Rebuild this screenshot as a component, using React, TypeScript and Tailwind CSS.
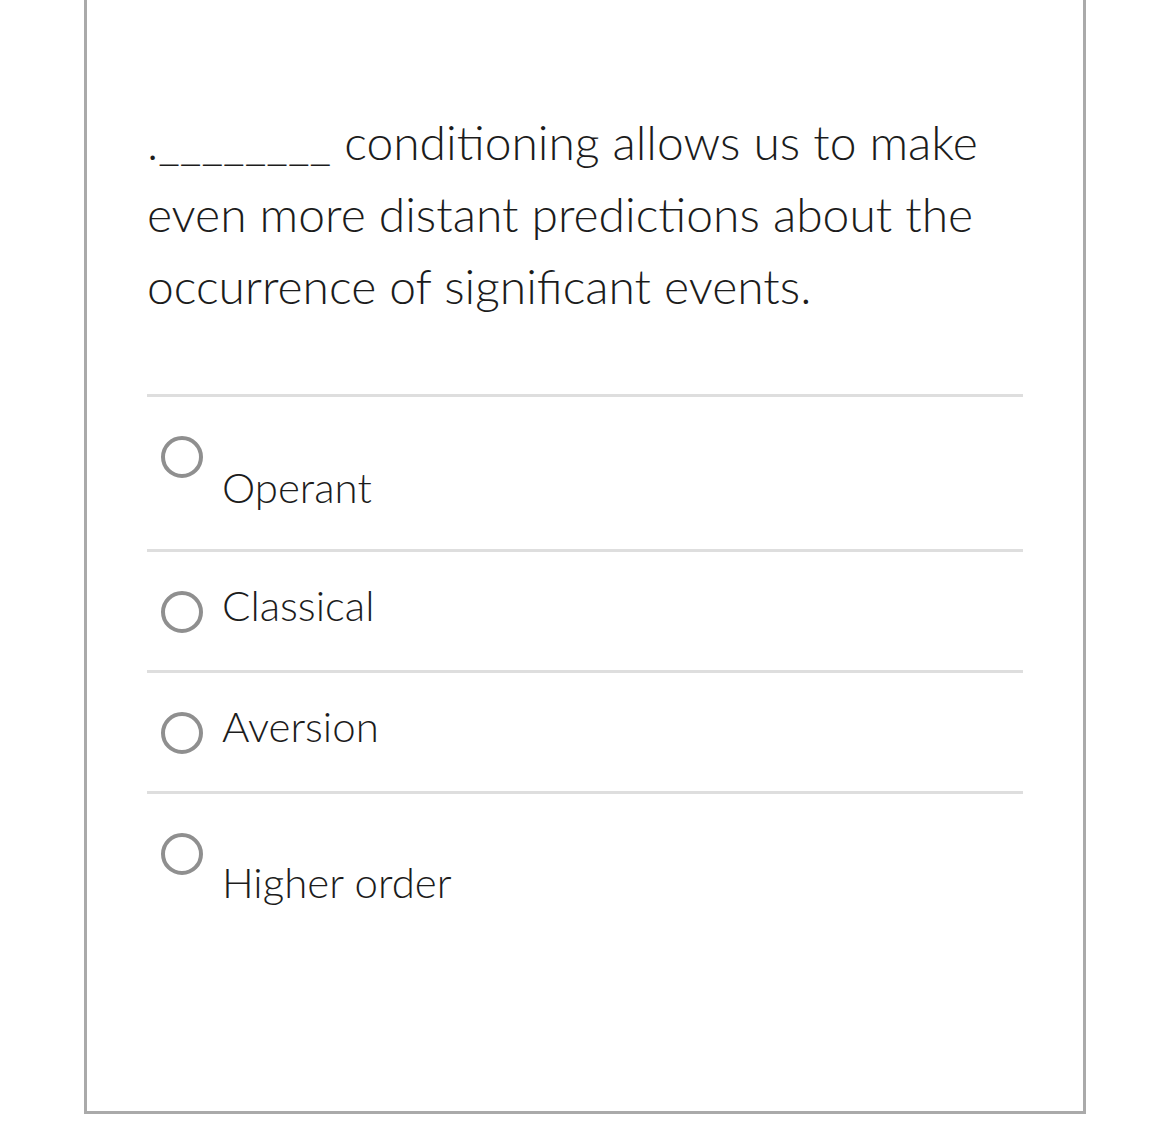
const options = [
  { label: "Operant", pad: "leading-[40px] pt-[33px] pb-[5px]" },
  { label: "Classical", pad: "leading-[32px]" },
  { label: "Aversion", pad: "leading-[32px]" },
  { label: "Higher order", pad: "leading-[40px] pt-[31px] pb-[7px]" },
];

export default function App() {
  return (
    <div className="min-h-[1148px] bg-white" style={{ fontFamily: "'Lato Light', Lato, 'Open Sans', sans-serif" }}>
      <div className="ml-[84px] w-[1002px] h-[1114px] border-x-[3px] border-b-[3px] border-[#aaaaaa] px-[60px] pt-[106px]">
        <p className="text-[48px] leading-[72px] font-light text-[#1c1c1c]">
          .________ conditioning allows us to make even more distant predictions about the occurrence of significant events.
        </p>
        <div className="mt-[72px]">
          {options.map((o) => (
            <div key={o.label} className="border-t-[3px] border-[#dedede] flex items-start gap-[19px] pl-[14px] py-[37px]">
              <span className="mt-[2px] shrink-0 w-[42px] h-[42px] rounded-full border-[4px] border-[#8f8f8f]" />
              <span className={`text-[42px] font-light text-[#1c1c1c] ${o.pad}`}>{o.label}</span>
            </div>
          ))}
        </div>
      </div>
    </div>
  );
}
